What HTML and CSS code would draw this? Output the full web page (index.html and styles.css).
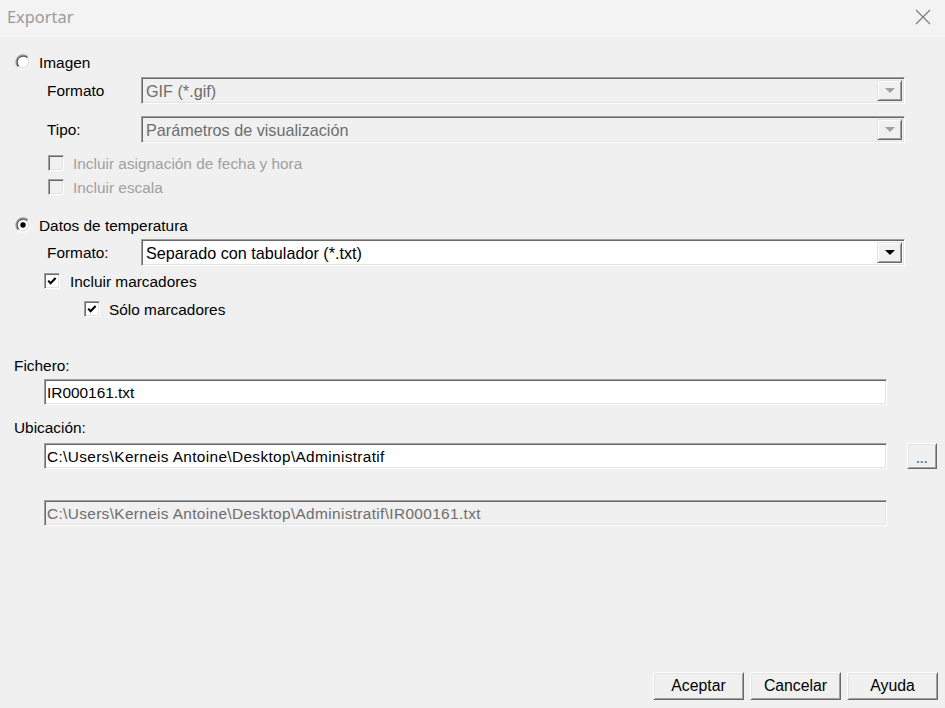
FILE: index.html
```html
<!DOCTYPE html>
<html lang="es">
<head>
<meta charset="utf-8">
<title>Exportar</title>
<link rel="stylesheet" href="styles.css">
</head>
<body>
<div class="dialog">
  <div class="titlebar">
    <span class="title">Exportar</span>
    <svg class="close" width="16" height="16" viewBox="0 0 16 16"><path d="M1 1L15 15M15 1L1 15" stroke="#7a7a7a" stroke-width="1.1" fill="none"/></svg>
  </div>

  <div class="content">
    <div class="row radio-row r-imagen">
      <svg class="radio" width="16" height="16" viewBox="0 0 16 16">
        <circle cx="8" cy="8" r="6" fill="#fff"/>
        <path d="M3.05 12.95A7 7 0 0 1 12.95 3.05" stroke="#a0a0a0" stroke-width="1.3" fill="none"/>
        <path d="M3.76 12.24A6 6 0 0 1 12.24 3.76" stroke="#5a5a5a" stroke-width="1.3" fill="none"/>
        <path d="M12.95 3.05A7 7 0 0 1 3.05 12.95" stroke="#ffffff" stroke-width="1.3" fill="none"/>
        <path d="M12.24 3.76A6 6 0 0 1 3.76 12.24" stroke="#dcdcdc" stroke-width="1.3" fill="none"/>
      </svg>
      <span class="label">Imagen</span>
    </div>

    <div class="row combo-row c-first">
      <span class="lbl">Formato</span>
      <div class="combo is-disabled">
        <span class="combo-text">GIF (*.gif)</span>
        <span class="combo-btn"><svg width="10" height="5" viewBox="0 0 10 5"><path d="M0 0H10L5 5Z" fill="#a0a0a0"/></svg></span>
      </div>
    </div>

    <div class="row combo-row c-second">
      <span class="lbl">Tipo:</span>
      <div class="combo is-disabled">
        <span class="combo-text">Parámetros de visualización</span>
        <span class="combo-btn"><svg width="10" height="5" viewBox="0 0 10 5"><path d="M0 0H10L5 5Z" fill="#a0a0a0"/></svg></span>
      </div>
    </div>

    <div class="row check-row ck-fecha">
      <span class="check is-disabled"></span>
      <span class="label disabled-text">Incluir asignación de fecha y hora</span>
    </div>

    <div class="row check-row ck-escala">
      <span class="check is-disabled"></span>
      <span class="label disabled-text">Incluir escala</span>
    </div>

    <div class="row radio-row r-datos">
      <svg class="radio" width="16" height="16" viewBox="0 0 16 16">
        <circle cx="8" cy="8" r="6" fill="#fff"/>
        <path d="M3.05 12.95A7 7 0 0 1 12.95 3.05" stroke="#a0a0a0" stroke-width="1.3" fill="none"/>
        <path d="M3.76 12.24A6 6 0 0 1 12.24 3.76" stroke="#5a5a5a" stroke-width="1.3" fill="none"/>
        <path d="M12.95 3.05A7 7 0 0 1 3.05 12.95" stroke="#ffffff" stroke-width="1.3" fill="none"/>
        <path d="M12.24 3.76A6 6 0 0 1 3.76 12.24" stroke="#dcdcdc" stroke-width="1.3" fill="none"/>
        <circle cx="8" cy="8" r="2.7" fill="#000"/>
      </svg>
      <span class="label">Datos de temperatura</span>
    </div>

    <div class="row combo-row c-third">
      <span class="lbl">Formato:</span>
      <div class="combo">
        <span class="combo-text">Separado con tabulador (*.txt)</span>
        <span class="combo-btn"><svg width="10" height="5" viewBox="0 0 10 5"><path d="M0 0H10L5 5Z" fill="#000"/></svg></span>
      </div>
    </div>

    <div class="row check-row ck-marc">
      <span class="check"><svg width="12" height="12" viewBox="0 0 12 12"><path d="M2.2 5.6L4.6 8.2L9.6 3" stroke="#000" stroke-width="2.1" fill="none"/></svg></span>
      <span class="label">Incluir marcadores</span>
    </div>

    <div class="row check-row ck-solo">
      <span class="check"><svg width="12" height="12" viewBox="0 0 12 12"><path d="M2.2 5.6L4.6 8.2L9.6 3" stroke="#000" stroke-width="2.1" fill="none"/></svg></span>
      <span class="label">Sólo marcadores</span>
    </div>

    <div class="row section-label fichero-lbl">Fichero:</div>
    <div class="row field-row f-fichero">
      <div class="field">IR000161.txt</div>
    </div>

    <div class="row section-label ubic-lbl">Ubicación:</div>
    <div class="row field-row f-ubic">
      <div class="field path">C:\Users\Kerneis Antoine\Desktop\Administratif</div>
      <button class="btn browse">...</button>
    </div>

    <div class="row field-row f-path">
      <div class="field path is-disabled">C:\Users\Kerneis Antoine\Desktop\Administratif\IR000161.txt</div>
    </div>
  </div>

  <div class="footer">
    <button class="btn action">Aceptar</button>
    <button class="btn action">Cancelar</button>
    <button class="btn action">Ayuda</button>
  </div>
</div>
</body>
</html>
```

FILE: styles.css
```css
* { box-sizing: border-box; }

html, body {
  margin: 0;
  padding: 0;
  background: #f0f0f0;
}

body {
  font-family: "Liberation Sans", Arial, sans-serif;
  font-size: 15.4px;
  color: #000;
}

.dialog {
  width: 945px;
  height: 708px;
  display: flex;
  flex-direction: column;
  overflow: hidden;
  background: #f0f0f0;
}

.titlebar {
  height: 37px;
  flex: none;
  display: flex;
  align-items: center;
  justify-content: space-between;
  padding: 0 14px 4px 7px;
  background: #f3f3f3;
}

.title {
  font-family: "Noto Sans", "Open Sans", sans-serif;
  font-size: 16.4px;
  color: #9a9a9a;
}

.close { display: block; }

.content {
  display: flex;
  flex-direction: column;
}

.row {
  display: flex;
  align-items: center;
}

.label { padding-top: 1px; }

/* radio rows */
.radio-row { height: 16px; padding-left: 15px; gap: 8px; }
.radio { display: block; flex: none; }
.r-imagen { margin-top: 17px; }
.r-datos { margin-top: 22px; }

/* combo rows */
.combo-row { height: 27px; padding-left: 47px; }
.lbl { width: 94px; flex: none; }
.c-first { margin-top: 7px; }
.c-second { margin-top: 12px; }
.c-third { margin-top: 6px; }

.combo {
  width: 764px;
  height: 27px;
  display: flex;
  align-items: stretch;
  background: #fff;
  border: 1px solid;
  border-color: #a0a0a0 #fff #fff #a0a0a0;
  box-shadow: inset 1px 1px 0 #696969, inset -1px -1px 0 #e3e3e3;
  padding: 2px 2px 2px 4px;
}
.combo.is-disabled { background: #f0f0f0; color: #6d6d6d; }

.combo-text {
  flex: 1;
  display: flex;
  align-items: center;
  white-space: nowrap;
  font-size: 16.2px;
  padding-top: 1px;
}

.combo-btn {
  width: 25px;
  flex: none;
  display: flex;
  align-items: center;
  justify-content: center;
  background: #f0f0f0;
  border: 1px solid;
  border-color: #e3e3e3 #696969 #696969 #e3e3e3;
  box-shadow: inset 1px 1px 0 #fff, inset -1px -1px 0 #a0a0a0;
}
.combo-btn svg { display: block; }

/* checkboxes */
.check-row { height: 16px; }
.ck-fecha { margin-top: 12px; padding-left: 48px; gap: 9px; }
.ck-escala { margin-top: 8px; padding-left: 48px; gap: 9px; }
.ck-marc { margin-top: 7px; padding-left: 44px; gap: 10px; }
.ck-solo { margin-top: 12px; padding-left: 84px; gap: 9px; }

.check {
  width: 16px;
  height: 16px;
  flex: none;
  display: flex;
  align-items: center;
  justify-content: center;
  background: #fff;
  border: 1px solid;
  border-color: #a0a0a0 #fff #fff #a0a0a0;
  box-shadow: inset 1px 1px 0 #696969, inset -1px -1px 0 #e3e3e3;
}
.check.is-disabled { background: #f0f0f0; }
.check svg { display: block; }

.disabled-text { color: #a0a0a0; }

/* labels & fields */
.section-label { height: 18px; padding-left: 14px; }
.fichero-lbl { margin-top: 40px; }
.ubic-lbl { margin-top: 14px; }

.field-row { padding-left: 44px; }
.f-fichero { margin-top: 4px; }
.f-ubic { margin-top: 6px; gap: 20px; }
.f-path { margin-top: 31px; }

.field {
  width: 843px;
  height: 26px;
  display: flex;
  align-items: center;
  padding: 1px 3px 0 2px;
  background: #fff;
  white-space: nowrap;
  border: 1px solid;
  border-color: #a0a0a0 #fff #fff #a0a0a0;
  box-shadow: inset 1px 1px 0 #696969, inset -1px -1px 0 #e3e3e3;
}
.field.path { letter-spacing: 0.35px; }
.field.is-disabled { background: #f0f0f0; color: #6d6d6d; }

/* buttons */
.btn {
  font-family: "Liberation Sans", Arial, sans-serif;
  font-size: 15.8px;
  color: #000;
  background: #f0f0f0;
  border: 1px solid;
  border-color: #fff #696969 #696969 #fff;
  box-shadow: inset 1px 1px 0 #e3e3e3, inset -1px -1px 0 #a0a0a0;
  padding: 0;
  margin: 0;
}

.browse {
  width: 30px;
  height: 26px;
  font-size: 12px;
  font-weight: bold;
  color: #5a7a9a;
  padding-top: 5px;
  letter-spacing: 0.5px;
}

.footer {
  margin-top: auto;
  display: flex;
  justify-content: flex-end;
  gap: 6px;
  padding: 0 7px 8px 0;
}

.action {
  width: 91px;
  height: 28px;
}
```
